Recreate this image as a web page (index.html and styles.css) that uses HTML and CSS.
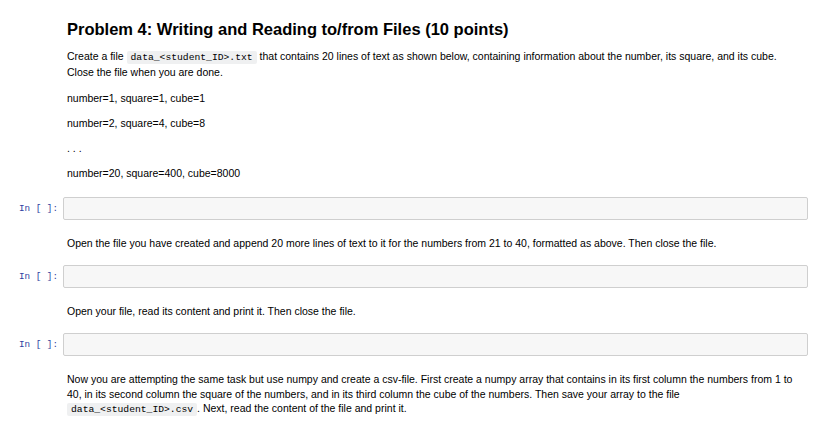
FILE: index.html
```html
<!DOCTYPE html>
<html>
<head>
<meta charset="utf-8">
<link rel="stylesheet" href="styles.css">
</head>
<body>
<div class="page">
  <div class="notebook">
    <div class="cell md first">
      <div class="prompt"></div>
      <div class="content">
        <h2>Problem 4: Writing and Reading to/from Files (10 points)</h2>
        <p>Create a file <code>data_&lt;student_ID&gt;.txt</code> that contains 20 lines of text as shown below, containing information about the number, its square, and its cube. Close the file when you are done.</p>
        <p>number=1, square=1, cube=1</p>
        <p>number=2, square=4, cube=8</p>
        <p>. . .</p>
        <p>number=20, square=400, cube=8000</p>
      </div>
    </div>
    <div class="cell code">
      <div class="prompt">In&nbsp;[&nbsp;]:</div>
      <div class="input"></div>
    </div>
    <div class="cell md">
      <div class="prompt"></div>
      <div class="content">
        <p>Open the file you have created and append 20 more lines of text to it for the numbers from 21 to 40, formatted as above. Then close the file.</p>
      </div>
    </div>
    <div class="cell code">
      <div class="prompt">In&nbsp;[&nbsp;]:</div>
      <div class="input"></div>
    </div>
    <div class="cell md">
      <div class="prompt"></div>
      <div class="content">
        <p>Open your file, read its content and print it. Then close the file.</p>
      </div>
    </div>
    <div class="cell code">
      <div class="prompt">In&nbsp;[&nbsp;]:</div>
      <div class="input"></div>
    </div>
    <div class="cell md">
      <div class="prompt"></div>
      <div class="content">
        <p>Now you are attempting the same task but use numpy and create a csv-file. First create a numpy array that contains in its first column the numbers from 1 to 40, in its second column the square of the numbers, and in its third column the cube of the numbers. Then save your array to the file <code>data_&lt;student_ID&gt;.csv</code>. Next, read the content of the file and print it.</p>
      </div>
    </div>
  </div>
  <div class="scrollbar">
    <div class="seg seg-light"></div>
    <div class="seg seg-dark1"></div>
    <div class="seg seg-mid"></div>
    <div class="seg seg-dark2"></div>
  </div>
</div>
</body>
</html>
```

FILE: styles.css
```css
html, body {
  margin: 0;
  padding: 0;
  background: #ffffff;
}

.page {
  height: 431px;
  display: flex;
  flex-direction: column;
  overflow: hidden;
}

.notebook {
  flex: 1;
  display: flex;
  flex-direction: column;
  font-family: "Liberation Sans", Arial, sans-serif;
  font-size: 10.5px;
  line-height: 14.3px;
  color: #000;
  padding-right: 16px;
}

.cell {
  display: flex;
  flex-direction: row;
}

.prompt {
  width: 63px;
  flex: none;
  font-family: "Liberation Mono", "DejaVu Sans Mono", monospace;
  font-size: 9.3px;
  color: #303f9f;
  text-align: right;
  padding-right: 5px;
  box-sizing: border-box;
  line-height: 23px;
}

.content {
  flex: 1;
  padding-left: 4px;
  padding-right: 4px;
  min-width: 0;
}

.md {
  padding-top: 16px;
  padding-bottom: 15px;
}

.md.first {
  padding-top: 20px;
  padding-bottom: 16px;
}

.input {
  flex: 1;
  height: 23px;
  box-sizing: border-box;
  background: #f7f7f7;
  border: 1px solid #cfcfcf;
  border-radius: 2px;
}

h2 {
  font-size: 16.5px;
  font-weight: bold;
  line-height: 19px;
  margin: 0 0 10px 0;
}

p {
  margin: 0 0 11px 0;
}

p:last-child {
  margin-bottom: 0;
}

code {
  font-family: "Liberation Mono", "DejaVu Sans Mono", monospace;
  font-size: 9.7px;
  background: #eff0f1;
  padding: 1px 4px;
  border-radius: 2px;
}

.scrollbar {
  height: 1px;
  display: flex;
  flex: none;
}

.seg { height: 1px; }
.seg-light { width: 127px; background: #c4c4c4; }
.seg-dark1 { width: 442px; background: #33393e; }
.seg-mid { width: 48px; background: #6b6b6b; }
.seg-dark2 { flex: 1; background: #33393e; }
```
